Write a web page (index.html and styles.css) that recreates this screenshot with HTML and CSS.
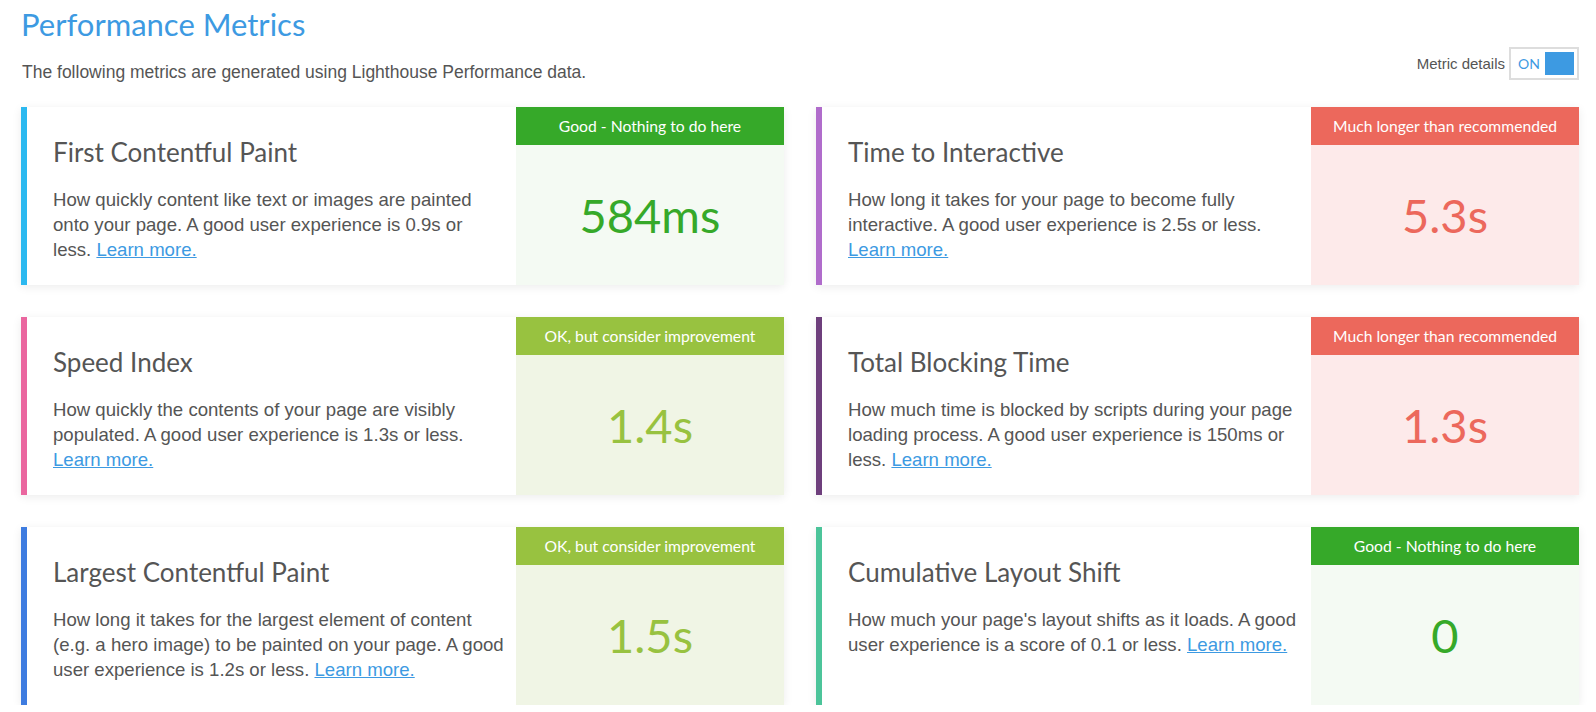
FILE: index.html
```html
<!DOCTYPE html>
<html>
<head>
<meta charset="utf-8">
<link rel="stylesheet" href="styles.css">
</head>
<body>
<div class="page">
  <div class="head">
    <div class="head-text">
      <h1 class="title">Performance Metrics</h1>
      <p class="subtitle">The following metrics are generated using Lighthouse Performance data.</p>
    </div>
    <div class="toggle-wrap">
      <span class="toggle-label">Metric details</span>
      <span class="toggle"><span class="toggle-on">ON</span><span class="toggle-knob"></span></span>
    </div>
  </div>
  <div class="grid">
    <div class="card b-fcp">
      <div class="info">
        <h2 class="card-title">First Contentful Paint</h2>
        <p class="desc">How quickly content like text or images are painted onto your page. A good user experience is 0.9s or <span class="nowrap">less. <a href="#">Learn more.</a></span></p>
      </div>
      <div class="panel good">
        <div class="badge">Good - Nothing to do here</div>
        <div class="value">584ms</div>
      </div>
    </div>
    <div class="card b-tti">
      <div class="info">
        <h2 class="card-title">Time to Interactive</h2>
        <p class="desc">How long it takes for your page to become fully interactive. A good user experience is 2.5s or less. <a href="#">Learn more.</a></p>
      </div>
      <div class="panel bad">
        <div class="badge">Much longer than recommended</div>
        <div class="value">5.3s</div>
      </div>
    </div>
    <div class="card b-si">
      <div class="info">
        <h2 class="card-title">Speed Index</h2>
        <p class="desc">How quickly the contents of your page are visibly populated. A good user experience is 1.3s or less. <a href="#">Learn more.</a></p>
      </div>
      <div class="panel ok">
        <div class="badge">OK, but consider improvement</div>
        <div class="value">1.4s</div>
      </div>
    </div>
    <div class="card b-tbt">
      <div class="info">
        <h2 class="card-title">Total Blocking Time</h2>
        <p class="desc">How much time is blocked by scripts during your page loading process. A good user experience is 150ms or less. <a href="#">Learn more.</a></p>
      </div>
      <div class="panel bad">
        <div class="badge">Much longer than recommended</div>
        <div class="value">1.3s</div>
      </div>
    </div>
    <div class="card b-lcp">
      <div class="info">
        <h2 class="card-title">Largest Contentful Paint</h2>
        <p class="desc">How long it takes for the largest element of content (e.g. a hero image) to be painted on your page. A good user experience is 1.2s or less. <a href="#">Learn more.</a></p>
      </div>
      <div class="panel ok">
        <div class="badge">OK, but consider improvement</div>
        <div class="value">1.5s</div>
      </div>
    </div>
    <div class="card b-cls">
      <div class="info">
        <h2 class="card-title">Cumulative Layout Shift</h2>
        <p class="desc">How much your page's layout shifts as it loads. A good user experience is a score of 0.1 or less. <a href="#">Learn more.</a></p>
      </div>
      <div class="panel good">
        <div class="badge">Good - Nothing to do here</div>
        <div class="value">0</div>
      </div>
    </div>
  </div>
</div>
</body>
</html>
```

FILE: styles.css
```css
* { box-sizing: border-box; }
html, body { margin: 0; padding: 0; background: #fff; }
body { font-family: "Liberation Sans", Arial, sans-serif; color: #555; }

.page { width: 1558px; margin-left: 21px; }

.head { display: flex; justify-content: space-between; align-items: flex-start; height: 107px; padding-top: 4px; }
.title { margin: 0; font-family: "Lato", sans-serif; font-weight: 400; font-size: 31px; color: #3d9ae2; line-height: 40px; }
.subtitle { margin: 18px 0 0 1px; font-size: 17.5px; line-height: 20px; color: #555; }

.toggle-wrap { display: flex; align-items: center; gap: 4px; margin-top: 43px; }
.toggle-label { font-size: 15px; color: #555; }
.toggle { display: flex; align-items: center; justify-content: space-between; width: 70px; height: 33px; border: 2px solid #ddd; padding: 3px 3px 3px 7px; }
.toggle-on { font-family: "Lato", sans-serif; font-size: 14px; color: #3d9ae2; }
.toggle-knob { width: 29px; height: 23px; background: #3d9ae2; }

.grid { display: grid; grid-template-columns: 763px 763px; column-gap: 32px; row-gap: 32px; }

.card { display: flex; height: 178px; background: #fff; border-left: 6px solid #ccc; box-shadow: 0 2px 9px rgba(0,0,0,0.08); }
.b-fcp { border-left-color: #2cb9f0; }
.b-tti { border-left-color: #b06ccb; }
.b-si { border-left-color: #ea669f; }
.b-tbt { border-left-color: #6e3f7c; }
.b-lcp { border-left-color: #3e7ce0; }
.b-cls { border-left-color: #4cc49a; }

.info { flex: 1; padding: 28px 6px 0 26px; }
.card-title { margin: 0; font-family: "Lato", sans-serif; font-weight: 400; font-size: 26px; line-height: 34px; color: #555; }
.desc { margin: 18px 0 0; font-size: 18.6px; line-height: 25px; color: #555; }
.desc a { color: #3d9ae2; text-decoration: underline; white-space: nowrap; }
.nowrap { white-space: nowrap; }

.panel { width: 268px; display: flex; flex-direction: column; }
.badge { height: 38px; display: flex; align-items: center; justify-content: center; font-family: "Lato", sans-serif; font-size: 15.7px; color: #fff; }
.value { flex: 1; display: flex; align-items: center; justify-content: center; font-family: "Lato", sans-serif; font-weight: 400; font-size: 47px; }

.good { background: #f4faf3; }
.good .badge { background: #36a929; }
.good .value { color: #36a929; }
.ok { background: #f0f5e5; }
.ok .badge { background: #98c240; }
.ok .value { color: #98c240; }
.bad { background: #fdeaea; }
.bad .badge { background: #ec685c; }
.bad .value { color: #ec685c; }
```
